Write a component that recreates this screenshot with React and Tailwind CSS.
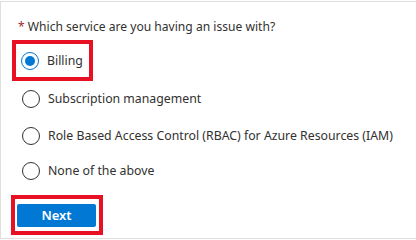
import { useState } from 'react';

const OPTIONS = [
  'Billing',
  'Subscription management',
  'Role Based Access Control (RBAC) for Azure Resources (IAM)',
  'None of the above',
];

function Radio({ checked }) {
  return (
    <span
      className={
        'flex h-[18px] w-[18px] shrink-0 items-center justify-center rounded-full border-[1.5px] ' +
        (checked ? 'border-[#0078d4]' : 'border-[#323130]')
      }
    >
      {checked && <span className="h-[10px] w-[10px] rounded-full bg-[#0078d4]" />}
    </span>
  );
}

function Option({ label, checked, onSelect }) {
  return (
    <div className="flex h-[20px] cursor-pointer items-center gap-[8px]" onClick={onSelect}>
      <Radio checked={checked} />
      <span className="whitespace-nowrap text-[12.3px] leading-[20px] text-[#323130]">{label}</span>
    </div>
  );
}

export default function App() {
  const [selected, setSelected] = useState(0);

  return (
    <div className="h-[240px] w-[416px] bg-white pt-[1px]" style={{ fontFamily: '"Segoe UI", "Noto Sans", sans-serif' }}>
      <div className="flex h-[238px] flex-col border-b border-l border-t border-[#e1dfdd] pl-[10px]">
        <p className="mt-[15px] pl-[7px] text-[12.1px] leading-[20px] text-[#323130]">
          <span className="text-[#a4262c]">*</span> Which service are you having an issue with?
        </p>

        <div className="mt-[3px] ml-[1px] flex h-[41px] w-[81px] items-center border-4 border-[#e81123] pl-[5px]">
          <Option label={OPTIONS[0]} checked={selected === 0} onSelect={() => setSelected(0)} />
        </div>

        <div className="mt-[8px] flex flex-col pl-[11px]">
          <Option label={OPTIONS[1]} checked={selected === 1} onSelect={() => setSelected(1)} />
          <div className="mt-[17px]">
            <Option label={OPTIONS[2]} checked={selected === 2} onSelect={() => setSelected(2)} />
          </div>
          <div className="mt-[15px]">
            <Option label={OPTIONS[3]} checked={selected === 3} onSelect={() => setSelected(3)} />
          </div>
        </div>

        <div className="mt-[14px] flex h-[40px] w-[92px] items-start border-4 border-[#e81123] pl-[2px] pt-[5px]">
          <button className="h-[23px] w-[79px] rounded-[2px] bg-[#0078d4] text-[13px] font-semibold leading-[23px] text-white">
            Next
          </button>
        </div>
      </div>
    </div>
  );
}
